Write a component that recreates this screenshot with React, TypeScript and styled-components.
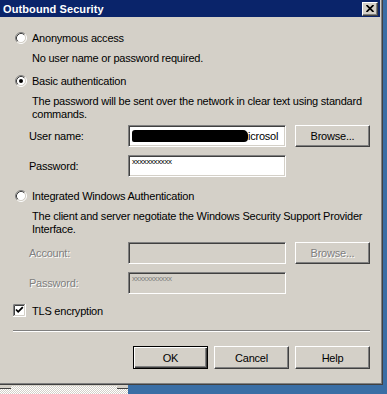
import React from 'react';
import styled, { createGlobalStyle } from 'styled-components';

const GlobalStyle = createGlobalStyle`
  html, body {
    margin: 0;
    padding: 0;
    background: #3a6ea5;
  }
  body {
    font-family: "Liberation Sans", Arial, sans-serif;
    font-size: 11px;
    letter-spacing: -0.22px;
    color: #000;
  }
`;

const Screen = styled.div`
  width: 387px;
  height: 394px;
  overflow: hidden;
  display: flex;
  flex-direction: column;
`;

const Window = styled.div`
  width: 383px;
  height: 385px;
  box-sizing: border-box;
  background: #d4d0c8;
  border-right: 1px solid #404040;
  border-bottom: 1px solid #404040;
  box-shadow: inset -1px -1px 0 #808080;
  display: flex;
  flex-direction: column;
`;

const TitleBar = styled.div`
  height: 17px;
  margin-right: 2px;
  background: #0a246a;
  display: flex;
  align-items: center;
  justify-content: space-between;
  padding: 0 2px 0 3px;
`;

const TitleText = styled.span`
  color: #fff;
  font-weight: bold;
  font-size: 11px;
  letter-spacing: 0.1px;
`;

const CloseBox = styled.div`
  width: 16px;
  height: 14px;
  box-sizing: border-box;
  background: #d4d0c8;
  border: 1px solid;
  border-color: #fff #404040 #404040 #fff;
  box-shadow: inset -1px -1px 0 #808080;
  display: flex;
  align-items: center;
  justify-content: center;
`;

const Body = styled.div`
  padding: 0 12px 0 13px;
  display: flex;
  flex-direction: column;
`;

const OptionRow = styled.div<{ $mt: number }>`
  margin-top: ${p => p.$mt}px;
  height: 13px;
  display: flex;
  align-items: center;
  padding-left: 2px;
  gap: 5px;
  white-space: nowrap;
`;

const CheckRow = styled(OptionRow)`
  padding-left: 0;
  gap: 6px;
`;

const Note = styled.div<{ $mt: number }>`
  margin-top: ${p => p.$mt}px;
  padding-left: 19px;
  line-height: 13px;
  white-space: nowrap;
`;

const Field = styled.div<{ $mt: number }>`
  margin-top: ${p => p.$mt}px;
  height: 22px;
  display: flex;
  align-items: center;
  padding-left: 16px;
`;

const Label = styled.span<{ $disabled?: boolean }>`
  width: 99px;
  color: ${p => (p.$disabled ? '#808080' : '#000')};
  text-shadow: ${p => (p.$disabled ? '1px 1px 0 #fff' : 'none')};
`;

const TextBox = styled.div<{ $disabled?: boolean }>`
  width: 158px;
  height: 22px;
  box-sizing: border-box;
  background: ${p => (p.$disabled ? '#d4d0c8' : '#fff')};
  border: 1px solid;
  border-color: #808080 #fff #fff #808080;
  box-shadow: inset 1px 1px 0 #404040, inset -1px -1px 0 #d4d0c8;
  padding: 0 2px 0 3px;
  display: flex;
  align-items: center;
  overflow: hidden;
  white-space: nowrap;
`;

const Redacted = styled.span`
  display: inline-block;
  flex: none;
  width: 116px;
  height: 12px;
  background: #000;
  border-radius: 3px 5px 4px 2px;
`;

const Stars = styled.span<{ $disabled?: boolean }>`
  align-self: flex-start;
  margin-top: 2px;
  font-size: 8px;
  line-height: 8px;
  letter-spacing: -0.4px;
  color: ${p => (p.$disabled ? '#808080' : '#000')};
`;

const Button = styled.button<{ $default?: boolean; $disabled?: boolean; $ml?: number }>`
  width: 75px;
  height: 23px;
  margin: 0 0 0 ${p => p.$ml ?? 0}px;
  padding: 0;
  box-sizing: border-box;
  font-family: inherit;
  font-size: 11px;
  letter-spacing: inherit;
  background: #d4d0c8;
  color: ${p => (p.$disabled ? '#808080' : '#000')};
  text-shadow: ${p => (p.$disabled ? '1px 1px 0 #fff' : 'none')};
  border: 1px solid;
  border-color: ${p => (p.$default ? '#000' : '#fff #404040 #404040 #fff')};
  box-shadow: ${p =>
    p.$default
      ? 'inset 1px 1px 0 #fff, inset -1px -1px 0 #404040, inset -2px -2px 0 #808080'
      : 'inset -1px -1px 0 #808080, inset 1px 1px 0 #d4d0c8'};
`;

const FieldButton = styled(Button)`
  height: 22px;
`;

const Separator = styled.div`
  margin-top: 13px;
  height: 0;
  border-top: 1px solid #808080;
  border-bottom: 1px solid #fff;
`;

const ButtonBar = styled.div`
  margin-top: 14px;
  display: flex;
  justify-content: flex-end;
  gap: 6px;
`;

const Strip = styled.div`
  height: 9px;
  display: flex;
`;

const StripLeft = styled.div`
  width: 128px;
  box-sizing: border-box;
  border-top: 1px solid #d4d0c8;
  background: repeating-conic-gradient(#d4d0c8 0 25%, #fff 0 50%) 0 0 / 2px 2px;
  display: flex;
  justify-content: space-between;
`;

const StripThumb = styled.div`
  width: 11px;
  height: 2px;
  background: #d4d0c8;
  border-bottom: 1px solid #404040;
`;

function Radio({ checked }: { checked?: boolean }) {
  return (
    <svg width="12" height="12" viewBox="0 0 12 12">
      <circle cx="6" cy="6" r="4.5" fill="#fff" />
      <path d="M2.11 9.89 A5.5 5.5 0 0 1 9.89 2.11" fill="none" stroke="#808080" />
      <path d="M9.89 2.11 A5.5 5.5 0 0 1 2.11 9.89" fill="none" stroke="#fff" />
      <path d="M2.82 9.18 A4.5 4.5 0 0 1 9.18 2.82" fill="none" stroke="#404040" />
      <path d="M9.18 2.82 A4.5 4.5 0 0 1 2.82 9.18" fill="none" stroke="#d4d0c8" />
      {checked && <circle cx="6" cy="6" r="2" fill="#000" />}
    </svg>
  );
}

function CheckBox() {
  return (
    <svg width="13" height="13" viewBox="0 0 13 13">
      <rect x="0" y="0" width="13" height="13" fill="#fff" />
      <path d="M0.5 12 V0.5 H12" fill="none" stroke="#808080" />
      <path d="M1.5 11 V1.5 H11" fill="none" stroke="#404040" />
      <path d="M0 12.5 H12.5 V0" fill="none" stroke="#fff" />
      <path d="M1 11.5 H11.5 V1" fill="none" stroke="#d4d0c8" />
      <path d="M3 5.5 L5.2 7.8 L9.8 3.2" fill="none" stroke="#000" strokeWidth="1.8" />
    </svg>
  );
}

function CloseGlyph() {
  return (
    <svg width="8" height="7" viewBox="0 0 8 7">
      <path d="M0.5 0 L7.5 7 M7.5 0 L0.5 7" stroke="#000" strokeWidth="1.7" />
    </svg>
  );
}

export default function App() {
  return (
    <>
      <GlobalStyle />
      <Screen>
        <Window>
          <TitleBar>
            <TitleText>Outbound Security</TitleText>
            <CloseBox><CloseGlyph /></CloseBox>
          </TitleBar>

          <Body>
            <OptionRow $mt={14}><Radio />Anonymous access</OptionRow>
            <Note $mt={8}>No user name or password required.</Note>

            <OptionRow $mt={9}><Radio checked />Basic authentication</OptionRow>
            <Note $mt={8}>
              The password will be sent over the network in clear text using standard<br />
              commands.
            </Note>
            <Field $mt={4}>
              <Label>User name:</Label>
              <TextBox><Redacted />icrosol</TextBox>
              <FieldButton $ml={9}>Browse...</FieldButton>
            </Field>
            <Field $mt={8}>
              <Label>Password:</Label>
              <TextBox><Stars>xxxxxxxxxxx</Stars></TextBox>
            </Field>

            <OptionRow $mt={12}><Radio />Integrated Windows Authentication</OptionRow>
            <Note $mt={8}>
              The client and server negotiate the Windows Security Support Provider<br />
              Interface.
            </Note>
            <Field $mt={6}>
              <Label $disabled>Account:</Label>
              <TextBox $disabled />
              <FieldButton $ml={9} $disabled>Browse...</FieldButton>
            </Field>
            <Field $mt={8}>
              <Label $disabled>Password:</Label>
              <TextBox $disabled><Stars $disabled>xxxxxxxxxxx</Stars></TextBox>
            </Field>

            <CheckRow $mt={10}><CheckBox />TLS encryption</CheckRow>

            <Separator />

            <ButtonBar>
              <Button $default>OK</Button>
              <Button>Cancel</Button>
              <Button>Help</Button>
            </ButtonBar>
          </Body>
        </Window>
        <Strip>
          <StripLeft>
            <StripThumb />
            <StripThumb />
          </StripLeft>
        </Strip>
      </Screen>
    </>
  );
}
